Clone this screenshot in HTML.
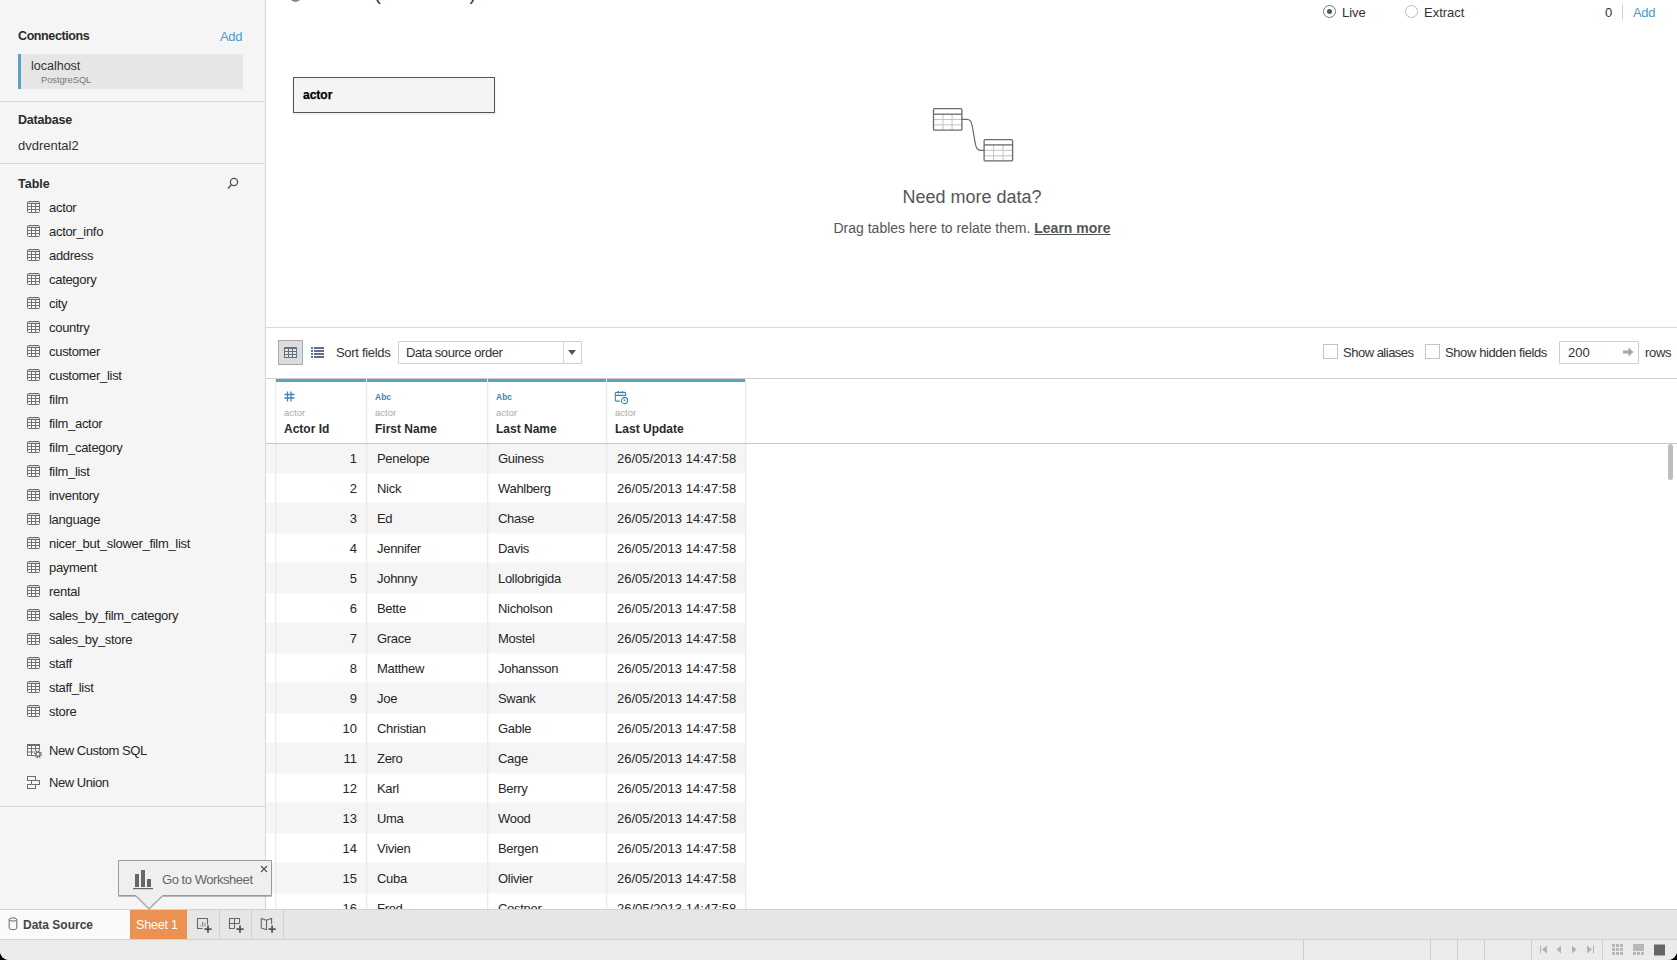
<!DOCTYPE html>
<html><head><meta charset="utf-8">
<style>
*{margin:0;padding:0;box-sizing:border-box}
html,body{width:1677px;height:960px;overflow:hidden;background:#000}
body{font-family:"Liberation Sans",sans-serif;color:#333;position:relative}
#win{position:absolute;left:0;top:0;width:1677px;height:960px;background:#fff;border-radius:0 0 9px 9px;overflow:hidden}
.a{position:absolute;white-space:nowrap}
#side{position:absolute;left:0;top:0;width:266px;height:909px;background:#f5f5f5;border-right:1px solid #d6d6d6}
.hd{font-weight:bold;font-size:12.5px;color:#2b2b2b;line-height:16px}
.hr{position:absolute;height:1px;background:#d9d9d9}
.tt{position:absolute;left:49px;font-size:13px;line-height:16px;color:#262626;letter-spacing:-0.3px}
.cell{position:absolute;font-size:13px;line-height:16px;color:#262626;white-space:nowrap}
.hsm{position:absolute;font-size:9.5px;line-height:12px;color:#aaa}
.hbig{position:absolute;font-size:12px;font-weight:bold;line-height:16px;color:#2b2b2b;white-space:nowrap}
</style></head><body><div id="win">
<div id="side">
<div class="a hd" style="left:18px;top:28px;letter-spacing:-0.4px">Connections</div>
<div class="a" style="left:220px;top:29px;font-size:13px;line-height:16px;color:#4c9bc6;letter-spacing:-0.3px">Add</div>
<div class="a" style="left:18px;top:54px;width:225px;height:35px;background:#e6e6e6;border-left:3px solid #5aa2c8"></div>
<div class="a" style="left:31px;top:58px;font-size:12.5px;line-height:16px;color:#333">localhost</div>
<div class="a" style="left:41px;top:74px;font-size:9.5px;line-height:12px;color:#7a7a7a;letter-spacing:-0.15px">PostgreSQL</div>
<div class="hr" style="left:0;top:101px;width:265px"></div>
<div class="a hd" style="left:18px;top:112px;letter-spacing:-0.2px">Database</div>
<div class="a" style="left:18px;top:138px;font-size:13px;line-height:16px;color:#333">dvdrental2</div>
<div class="hr" style="left:0;top:163px;width:265px"></div>
<div class="a hd" style="left:18px;top:176px">Table</div>
<svg class="a" style="left:227px;top:177px" width="12" height="13" viewBox="0 0 12 13"><circle cx="7" cy="5" r="3.6" fill="none" stroke="#555" stroke-width="1.3"/><line x1="4.3" y1="7.8" x2="1" y2="11.5" stroke="#555" stroke-width="1.5"/></svg>
<svg class="a" style="left:27px;top:201px" width="13" height="12" viewBox="0 0 13 12"><rect x="0.5" y="0.5" width="12" height="11" rx="1" fill="#fafafa" stroke="#6e6e6e" stroke-width="1"/><rect x="1" y="1" width="11" height="1" fill="#d6d6d6"/><path d="M0.5 2.5h12M0.5 5.5h12M0.5 8.5h12M4.5 2.5v9M8.5 2.5v9" stroke="#6e6e6e" stroke-width="1" fill="none"/></svg>
<div class="tt" style="top:200px">actor</div>
<svg class="a" style="left:27px;top:225px" width="13" height="12" viewBox="0 0 13 12"><rect x="0.5" y="0.5" width="12" height="11" rx="1" fill="#fafafa" stroke="#6e6e6e" stroke-width="1"/><rect x="1" y="1" width="11" height="1" fill="#d6d6d6"/><path d="M0.5 2.5h12M0.5 5.5h12M0.5 8.5h12M4.5 2.5v9M8.5 2.5v9" stroke="#6e6e6e" stroke-width="1" fill="none"/></svg>
<div class="tt" style="top:224px">actor_info</div>
<svg class="a" style="left:27px;top:249px" width="13" height="12" viewBox="0 0 13 12"><rect x="0.5" y="0.5" width="12" height="11" rx="1" fill="#fafafa" stroke="#6e6e6e" stroke-width="1"/><rect x="1" y="1" width="11" height="1" fill="#d6d6d6"/><path d="M0.5 2.5h12M0.5 5.5h12M0.5 8.5h12M4.5 2.5v9M8.5 2.5v9" stroke="#6e6e6e" stroke-width="1" fill="none"/></svg>
<div class="tt" style="top:248px">address</div>
<svg class="a" style="left:27px;top:273px" width="13" height="12" viewBox="0 0 13 12"><rect x="0.5" y="0.5" width="12" height="11" rx="1" fill="#fafafa" stroke="#6e6e6e" stroke-width="1"/><rect x="1" y="1" width="11" height="1" fill="#d6d6d6"/><path d="M0.5 2.5h12M0.5 5.5h12M0.5 8.5h12M4.5 2.5v9M8.5 2.5v9" stroke="#6e6e6e" stroke-width="1" fill="none"/></svg>
<div class="tt" style="top:272px">category</div>
<svg class="a" style="left:27px;top:297px" width="13" height="12" viewBox="0 0 13 12"><rect x="0.5" y="0.5" width="12" height="11" rx="1" fill="#fafafa" stroke="#6e6e6e" stroke-width="1"/><rect x="1" y="1" width="11" height="1" fill="#d6d6d6"/><path d="M0.5 2.5h12M0.5 5.5h12M0.5 8.5h12M4.5 2.5v9M8.5 2.5v9" stroke="#6e6e6e" stroke-width="1" fill="none"/></svg>
<div class="tt" style="top:296px">city</div>
<svg class="a" style="left:27px;top:321px" width="13" height="12" viewBox="0 0 13 12"><rect x="0.5" y="0.5" width="12" height="11" rx="1" fill="#fafafa" stroke="#6e6e6e" stroke-width="1"/><rect x="1" y="1" width="11" height="1" fill="#d6d6d6"/><path d="M0.5 2.5h12M0.5 5.5h12M0.5 8.5h12M4.5 2.5v9M8.5 2.5v9" stroke="#6e6e6e" stroke-width="1" fill="none"/></svg>
<div class="tt" style="top:320px">country</div>
<svg class="a" style="left:27px;top:345px" width="13" height="12" viewBox="0 0 13 12"><rect x="0.5" y="0.5" width="12" height="11" rx="1" fill="#fafafa" stroke="#6e6e6e" stroke-width="1"/><rect x="1" y="1" width="11" height="1" fill="#d6d6d6"/><path d="M0.5 2.5h12M0.5 5.5h12M0.5 8.5h12M4.5 2.5v9M8.5 2.5v9" stroke="#6e6e6e" stroke-width="1" fill="none"/></svg>
<div class="tt" style="top:344px">customer</div>
<svg class="a" style="left:27px;top:369px" width="13" height="12" viewBox="0 0 13 12"><rect x="0.5" y="0.5" width="12" height="11" rx="1" fill="#fafafa" stroke="#6e6e6e" stroke-width="1"/><rect x="1" y="1" width="11" height="1" fill="#d6d6d6"/><path d="M0.5 2.5h12M0.5 5.5h12M0.5 8.5h12M4.5 2.5v9M8.5 2.5v9" stroke="#6e6e6e" stroke-width="1" fill="none"/></svg>
<div class="tt" style="top:368px">customer_list</div>
<svg class="a" style="left:27px;top:393px" width="13" height="12" viewBox="0 0 13 12"><rect x="0.5" y="0.5" width="12" height="11" rx="1" fill="#fafafa" stroke="#6e6e6e" stroke-width="1"/><rect x="1" y="1" width="11" height="1" fill="#d6d6d6"/><path d="M0.5 2.5h12M0.5 5.5h12M0.5 8.5h12M4.5 2.5v9M8.5 2.5v9" stroke="#6e6e6e" stroke-width="1" fill="none"/></svg>
<div class="tt" style="top:392px">film</div>
<svg class="a" style="left:27px;top:417px" width="13" height="12" viewBox="0 0 13 12"><rect x="0.5" y="0.5" width="12" height="11" rx="1" fill="#fafafa" stroke="#6e6e6e" stroke-width="1"/><rect x="1" y="1" width="11" height="1" fill="#d6d6d6"/><path d="M0.5 2.5h12M0.5 5.5h12M0.5 8.5h12M4.5 2.5v9M8.5 2.5v9" stroke="#6e6e6e" stroke-width="1" fill="none"/></svg>
<div class="tt" style="top:416px">film_actor</div>
<svg class="a" style="left:27px;top:441px" width="13" height="12" viewBox="0 0 13 12"><rect x="0.5" y="0.5" width="12" height="11" rx="1" fill="#fafafa" stroke="#6e6e6e" stroke-width="1"/><rect x="1" y="1" width="11" height="1" fill="#d6d6d6"/><path d="M0.5 2.5h12M0.5 5.5h12M0.5 8.5h12M4.5 2.5v9M8.5 2.5v9" stroke="#6e6e6e" stroke-width="1" fill="none"/></svg>
<div class="tt" style="top:440px">film_category</div>
<svg class="a" style="left:27px;top:465px" width="13" height="12" viewBox="0 0 13 12"><rect x="0.5" y="0.5" width="12" height="11" rx="1" fill="#fafafa" stroke="#6e6e6e" stroke-width="1"/><rect x="1" y="1" width="11" height="1" fill="#d6d6d6"/><path d="M0.5 2.5h12M0.5 5.5h12M0.5 8.5h12M4.5 2.5v9M8.5 2.5v9" stroke="#6e6e6e" stroke-width="1" fill="none"/></svg>
<div class="tt" style="top:464px">film_list</div>
<svg class="a" style="left:27px;top:489px" width="13" height="12" viewBox="0 0 13 12"><rect x="0.5" y="0.5" width="12" height="11" rx="1" fill="#fafafa" stroke="#6e6e6e" stroke-width="1"/><rect x="1" y="1" width="11" height="1" fill="#d6d6d6"/><path d="M0.5 2.5h12M0.5 5.5h12M0.5 8.5h12M4.5 2.5v9M8.5 2.5v9" stroke="#6e6e6e" stroke-width="1" fill="none"/></svg>
<div class="tt" style="top:488px">inventory</div>
<svg class="a" style="left:27px;top:513px" width="13" height="12" viewBox="0 0 13 12"><rect x="0.5" y="0.5" width="12" height="11" rx="1" fill="#fafafa" stroke="#6e6e6e" stroke-width="1"/><rect x="1" y="1" width="11" height="1" fill="#d6d6d6"/><path d="M0.5 2.5h12M0.5 5.5h12M0.5 8.5h12M4.5 2.5v9M8.5 2.5v9" stroke="#6e6e6e" stroke-width="1" fill="none"/></svg>
<div class="tt" style="top:512px">language</div>
<svg class="a" style="left:27px;top:537px" width="13" height="12" viewBox="0 0 13 12"><rect x="0.5" y="0.5" width="12" height="11" rx="1" fill="#fafafa" stroke="#6e6e6e" stroke-width="1"/><rect x="1" y="1" width="11" height="1" fill="#d6d6d6"/><path d="M0.5 2.5h12M0.5 5.5h12M0.5 8.5h12M4.5 2.5v9M8.5 2.5v9" stroke="#6e6e6e" stroke-width="1" fill="none"/></svg>
<div class="tt" style="top:536px">nicer_but_slower_film_list</div>
<svg class="a" style="left:27px;top:561px" width="13" height="12" viewBox="0 0 13 12"><rect x="0.5" y="0.5" width="12" height="11" rx="1" fill="#fafafa" stroke="#6e6e6e" stroke-width="1"/><rect x="1" y="1" width="11" height="1" fill="#d6d6d6"/><path d="M0.5 2.5h12M0.5 5.5h12M0.5 8.5h12M4.5 2.5v9M8.5 2.5v9" stroke="#6e6e6e" stroke-width="1" fill="none"/></svg>
<div class="tt" style="top:560px">payment</div>
<svg class="a" style="left:27px;top:585px" width="13" height="12" viewBox="0 0 13 12"><rect x="0.5" y="0.5" width="12" height="11" rx="1" fill="#fafafa" stroke="#6e6e6e" stroke-width="1"/><rect x="1" y="1" width="11" height="1" fill="#d6d6d6"/><path d="M0.5 2.5h12M0.5 5.5h12M0.5 8.5h12M4.5 2.5v9M8.5 2.5v9" stroke="#6e6e6e" stroke-width="1" fill="none"/></svg>
<div class="tt" style="top:584px">rental</div>
<svg class="a" style="left:27px;top:609px" width="13" height="12" viewBox="0 0 13 12"><rect x="0.5" y="0.5" width="12" height="11" rx="1" fill="#fafafa" stroke="#6e6e6e" stroke-width="1"/><rect x="1" y="1" width="11" height="1" fill="#d6d6d6"/><path d="M0.5 2.5h12M0.5 5.5h12M0.5 8.5h12M4.5 2.5v9M8.5 2.5v9" stroke="#6e6e6e" stroke-width="1" fill="none"/></svg>
<div class="tt" style="top:608px">sales_by_film_category</div>
<svg class="a" style="left:27px;top:633px" width="13" height="12" viewBox="0 0 13 12"><rect x="0.5" y="0.5" width="12" height="11" rx="1" fill="#fafafa" stroke="#6e6e6e" stroke-width="1"/><rect x="1" y="1" width="11" height="1" fill="#d6d6d6"/><path d="M0.5 2.5h12M0.5 5.5h12M0.5 8.5h12M4.5 2.5v9M8.5 2.5v9" stroke="#6e6e6e" stroke-width="1" fill="none"/></svg>
<div class="tt" style="top:632px">sales_by_store</div>
<svg class="a" style="left:27px;top:657px" width="13" height="12" viewBox="0 0 13 12"><rect x="0.5" y="0.5" width="12" height="11" rx="1" fill="#fafafa" stroke="#6e6e6e" stroke-width="1"/><rect x="1" y="1" width="11" height="1" fill="#d6d6d6"/><path d="M0.5 2.5h12M0.5 5.5h12M0.5 8.5h12M4.5 2.5v9M8.5 2.5v9" stroke="#6e6e6e" stroke-width="1" fill="none"/></svg>
<div class="tt" style="top:656px">staff</div>
<svg class="a" style="left:27px;top:681px" width="13" height="12" viewBox="0 0 13 12"><rect x="0.5" y="0.5" width="12" height="11" rx="1" fill="#fafafa" stroke="#6e6e6e" stroke-width="1"/><rect x="1" y="1" width="11" height="1" fill="#d6d6d6"/><path d="M0.5 2.5h12M0.5 5.5h12M0.5 8.5h12M4.5 2.5v9M8.5 2.5v9" stroke="#6e6e6e" stroke-width="1" fill="none"/></svg>
<div class="tt" style="top:680px">staff_list</div>
<svg class="a" style="left:27px;top:705px" width="13" height="12" viewBox="0 0 13 12"><rect x="0.5" y="0.5" width="12" height="11" rx="1" fill="#fafafa" stroke="#6e6e6e" stroke-width="1"/><rect x="1" y="1" width="11" height="1" fill="#d6d6d6"/><path d="M0.5 2.5h12M0.5 5.5h12M0.5 8.5h12M4.5 2.5v9M8.5 2.5v9" stroke="#6e6e6e" stroke-width="1" fill="none"/></svg>
<div class="tt" style="top:704px">store</div>
<svg class="a" style="left:26px;top:743px" width="17" height="17" viewBox="0 0 17 17"><rect x="1.5" y="1.5" width="12" height="11" fill="#fafafa" stroke="#6e6e6e" stroke-width="1"/><rect x="1" y="1" width="13" height="2" fill="#6e6e6e"/><path d="M1.5 5.5h12M1.5 9h12M5.5 3v9.5M9.5 3v9.5" stroke="#6e6e6e" stroke-width="1"/><circle cx="12" cy="11.3" r="4.2" fill="#f5f5f5"/><circle cx="12" cy="11.3" r="3.2" fill="none" stroke="#6e6e6e" stroke-width="1.6" stroke-dasharray="1.3 1.2"/><circle cx="12" cy="11.3" r="2.1" fill="none" stroke="#6e6e6e" stroke-width="1.3"/></svg>
<div class="tt" style="top:743px;letter-spacing:-0.45px">New Custom SQL</div>
<svg class="a" style="left:26px;top:775px" width="16" height="17" viewBox="0 0 16 17"><g fill="none" stroke="#6e6e6e" stroke-width="1"><rect x="1.5" y="1.5" width="8" height="4"/><rect x="5.5" y="5.5" width="8" height="4"/><rect x="1.5" y="9.5" width="8" height="4"/></g></svg>
<div class="tt" style="top:775px;letter-spacing:-0.45px">New Union</div>
<div class="hr" style="left:0;top:806px;width:265px"></div>
</div>
<div class="a" style="left:327px;top:-17px;font-size:19px;line-height:22px;color:#333">actor (dvdrental2)</div>
<div class="a" style="left:290px;top:-8px;width:11px;height:10px;border-radius:50%;background:#8a8a8a"></div>
<div class="a" style="left:1323px;top:5px;width:13px;height:13px;border-radius:50%;border:1px solid #777;background:#fff"></div>
<div class="a" style="left:1327px;top:9px;width:5px;height:5px;border-radius:50%;background:#555"></div>
<div class="a" style="left:1342px;top:5px;font-size:13px;line-height:16px;color:#333">Live</div>
<div class="a" style="left:1405px;top:5px;width:13px;height:13px;border-radius:50%;border:1px solid #bbb;background:#fff"></div>
<div class="a" style="left:1424px;top:5px;font-size:13px;line-height:16px;color:#333">Extract</div>
<div class="a" style="left:1605px;top:5px;font-size:13px;line-height:16px;color:#333">0</div>
<div class="a" style="left:1622px;top:4px;width:1px;height:16px;background:#d4d4d4"></div>
<div class="a" style="left:1633px;top:5px;font-size:13px;line-height:16px;color:#4c9bc6;letter-spacing:-0.3px">Add</div>
<div class="a" style="left:293px;top:77px;width:202px;height:36px;background:#f4f4f4;border:1px solid #555;box-shadow:0 1px 2px rgba(0,0,0,0.12)"></div>
<div class="a" style="left:303px;top:87px;font-size:12px;font-weight:bold;line-height:16px;color:#000;-webkit-text-stroke:0.25px #000">actor</div>
<svg class="a" style="left:930px;top:105px" width="90" height="60" viewBox="0 0 90 60">
<g fill="none">
<path d="M3.5 14.5h28M3.5 19.8h28M13 9.2v16M22.1 9.2v16" stroke="#c4c4c4" stroke-width="1"/>
<rect x="3.5" y="3.7" width="28.4" height="21.5" rx="1.2" stroke="#6a6a6a" stroke-width="1.3"/>
<path d="M3.5 9.2h28.4" stroke="#6a6a6a" stroke-width="1.3"/>
<path d="M54.1 45.3h28.5M54.1 50.8h28.5M63.6 39.8v16M73.1 39.8v16" stroke="#c4c4c4" stroke-width="1"/>
<rect x="54.1" y="34.7" width="28.5" height="21.2" rx="1.2" stroke="#6a6a6a" stroke-width="1.3"/>
<path d="M54.1 39.9h28.5" stroke="#6a6a6a" stroke-width="1.3"/>
<path d="M31.9 14.3h5c3 0 4.6 2 5.2 6l3 17c0.6 4 2.2 8 5.2 8h3.8" stroke="#6a6a6a" stroke-width="1.2"/>
</g></svg>
<div class="a" style="left:0;width:1944px;text-align:center;top:186px;font-size:18px;line-height:22px;color:#555">Need more data?</div>
<div class="a" style="left:0;width:1944px;text-align:center;top:219px;font-size:14px;line-height:18px;color:#555">Drag tables here to relate them. <b style="text-decoration:underline;color:#555">Learn more</b></div>
<div class="a" style="left:266px;top:327px;width:1411px;height:1px;background:#d9d9d9"></div>
<div class="a" style="left:278px;top:340px;width:25px;height:25px;background:#dcdcdc;border:1px solid #a9a9a9"></div>
<svg class="a" style="left:284px;top:347px" width="13" height="11" viewBox="0 0 13 11"><rect x="0" y="0" width="13" height="11" rx="0.5" fill="#607089"/><g fill="#e9e7e3"><rect x="1" y="2" width="3" height="2"/><rect x="5" y="2" width="3" height="2"/><rect x="9" y="2" width="3" height="2"/><rect x="1" y="5" width="3" height="2"/><rect x="5" y="5" width="3" height="2"/><rect x="9" y="5" width="3" height="2"/><rect x="1" y="8" width="3" height="2"/><rect x="5" y="8" width="3" height="2"/><rect x="9" y="8" width="3" height="2"/></g></svg>
<svg class="a" style="left:311px;top:347px" width="13" height="11" viewBox="0 0 13 11"><g fill="#607089"><rect x="0" y="0" width="2" height="2"/><rect x="0" y="3" width="2" height="2"/><rect x="0" y="6" width="2" height="2"/><rect x="0" y="9" width="2" height="2"/><rect x="3" y="0" width="10" height="2"/><rect x="3" y="3" width="10" height="2"/><rect x="3" y="6" width="10" height="2"/><rect x="3" y="9" width="10" height="2"/></g></svg>
<div class="a" style="left:336px;top:345px;font-size:13px;line-height:16px;color:#333;letter-spacing:-0.3px">Sort fields</div>
<div class="a" style="left:398px;top:341px;width:184px;height:23px;background:#fff;border:1px solid #cfcfcf;border-radius:1px"></div>
<div class="a" style="left:563px;top:342px;width:1px;height:21px;background:#d6d6d6"></div>
<div class="a" style="left:568px;top:350px;width:0;height:0;border-left:4.5px solid transparent;border-right:4.5px solid transparent;border-top:5px solid #555"></div>
<div class="a" style="left:406px;top:345px;font-size:13px;line-height:16px;color:#333;letter-spacing:-0.45px">Data source order</div>
<div class="a" style="left:1323px;top:344px;width:15px;height:15px;border:1px solid #c4c4c4;background:#fff"></div>
<div class="a" style="left:1343px;top:345px;font-size:13px;line-height:16px;color:#333;letter-spacing:-0.5px">Show aliases</div>
<div class="a" style="left:1425px;top:344px;width:15px;height:15px;border:1px solid #c4c4c4;background:#fff"></div>
<div class="a" style="left:1445px;top:345px;font-size:13px;line-height:16px;color:#333;letter-spacing:-0.4px">Show hidden fields</div>
<div class="a" style="left:1559px;top:341px;width:80px;height:23px;border:1px solid #cfcfcf;background:#fff;border-radius:1px"></div>
<div class="a" style="left:1568px;top:345px;font-size:13px;line-height:16px;color:#333">200</div>
<svg class="a" style="left:1623px;top:347px" width="11" height="10" viewBox="0 0 11 10"><path d="M0 3.5h5.5V0.5L10.5 5 5.5 9.5V6.5H0z" fill="#a6a6a6"/></svg>
<div class="a" style="left:1645px;top:345px;font-size:13px;line-height:16px;color:#333;letter-spacing:-0.3px">rows</div>
<div class="a" style="left:266px;top:378px;width:1411px;height:1px;background:#cfcfcf"></div>
<svg class="a" style="left:266px;top:444px" width="480" height="466" viewBox="0 0 480 466"><rect x="0" y="0" width="480" height="29.5" fill="#f5f5f5"/><rect x="0" y="58.5" width="480" height="31" fill="#f5f5f5"/><rect x="0" y="118.5" width="480" height="31" fill="#f5f5f5"/><rect x="0" y="178.5" width="480" height="31" fill="#f5f5f5"/><rect x="0" y="238.5" width="480" height="31" fill="#f5f5f5"/><rect x="0" y="298.5" width="480" height="31" fill="#f5f5f5"/><rect x="0" y="358.5" width="480" height="31" fill="#f5f5f5"/><rect x="0" y="418.5" width="480" height="31" fill="#f5f5f5"/></svg>
<div class="a" style="left:276px;top:379px;width:90px;height:3px;background:#5aa2c8"></div>
<div class="a" style="left:367px;top:379px;width:120px;height:3px;background:#5aa2c8"></div>
<div class="a" style="left:488px;top:379px;width:118px;height:3px;background:#5aa2c8"></div>
<div class="a" style="left:607px;top:379px;width:138px;height:3px;background:#5aa2c8"></div>
<div class="a" style="left:275px;top:379px;width:1px;height:530px;background:#ebebeb"></div>
<div class="a" style="left:276px;top:379px;width:1px;height:530px;background:rgba(0,0,0,0.025)"></div>
<div class="a" style="left:366px;top:379px;width:1px;height:530px;background:#ebebeb"></div>
<div class="a" style="left:367px;top:379px;width:1px;height:530px;background:rgba(0,0,0,0.025)"></div>
<div class="a" style="left:487px;top:379px;width:1px;height:530px;background:#ebebeb"></div>
<div class="a" style="left:488px;top:379px;width:1px;height:530px;background:rgba(0,0,0,0.025)"></div>
<div class="a" style="left:606px;top:379px;width:1px;height:530px;background:#ebebeb"></div>
<div class="a" style="left:607px;top:379px;width:1px;height:530px;background:rgba(0,0,0,0.025)"></div>
<div class="a" style="left:745px;top:379px;width:1px;height:530px;background:#ebebeb"></div>
<div class="a" style="left:746px;top:379px;width:1px;height:530px;background:rgba(0,0,0,0.025)"></div>
<div class="a" style="left:266px;top:443px;width:1411px;height:1px;background:#c6c8ca"></div>
<svg class="a" style="left:284px;top:391px" width="11" height="11" viewBox="0 0 11 11"><path d="M3.5 0.5v10M7 0.5v10M0.5 3.5h10M0.5 7h10" stroke="#4088ad" stroke-width="1.3"/></svg>
<div class="a" style="left:375px;top:392px;font-size:8.5px;font-weight:bold;line-height:11px;color:#4088ad">Abc</div>
<div class="a" style="left:496px;top:392px;font-size:8.5px;font-weight:bold;line-height:11px;color:#4088ad">Abc</div>
<svg class="a" style="left:614px;top:390px" width="16" height="16" viewBox="0 0 16 16"><g fill="none" stroke="#3f86aa" stroke-width="1.1"><path d="M5.8 11.1H2.3a1 1 0 0 1-1-1V3.4a1 1 0 0 1 1-1h8.4a1 1 0 0 1 1 1v2.3"/><path d="M1.3 5.4h10.4M4.4 1v2.6M8.5 1v2.6"/><circle cx="10.5" cy="10.5" r="3.1"/><path d="M10.1 8.5v2.2h1.5" stroke-width="1"/></g></svg>
<div class="hsm" style="left:284px;top:407px">actor</div>
<div class="hbig" style="left:284px;top:421px">Actor Id</div>
<div class="hsm" style="left:375px;top:407px">actor</div>
<div class="hbig" style="left:375px;top:421px">First Name</div>
<div class="hsm" style="left:496px;top:407px">actor</div>
<div class="hbig" style="left:496px;top:421px">Last Name</div>
<div class="hsm" style="left:615px;top:407px">actor</div>
<div class="hbig" style="left:615px;top:421px">Last Update</div>
<div class="cell" style="left:275px;width:82px;text-align:right;top:451px">1</div>
<div class="cell" style="left:377px;top:451px;letter-spacing:-0.3px">Penelope</div>
<div class="cell" style="left:498px;top:451px;letter-spacing:-0.3px">Guiness</div>
<div class="cell" style="left:617px;top:451px">26/05/2013 14:47:58</div>
<div class="cell" style="left:275px;width:82px;text-align:right;top:481px">2</div>
<div class="cell" style="left:377px;top:481px;letter-spacing:-0.3px">Nick</div>
<div class="cell" style="left:498px;top:481px;letter-spacing:-0.3px">Wahlberg</div>
<div class="cell" style="left:617px;top:481px">26/05/2013 14:47:58</div>
<div class="cell" style="left:275px;width:82px;text-align:right;top:511px">3</div>
<div class="cell" style="left:377px;top:511px;letter-spacing:-0.3px">Ed</div>
<div class="cell" style="left:498px;top:511px;letter-spacing:-0.3px">Chase</div>
<div class="cell" style="left:617px;top:511px">26/05/2013 14:47:58</div>
<div class="cell" style="left:275px;width:82px;text-align:right;top:541px">4</div>
<div class="cell" style="left:377px;top:541px;letter-spacing:-0.3px">Jennifer</div>
<div class="cell" style="left:498px;top:541px;letter-spacing:-0.3px">Davis</div>
<div class="cell" style="left:617px;top:541px">26/05/2013 14:47:58</div>
<div class="cell" style="left:275px;width:82px;text-align:right;top:571px">5</div>
<div class="cell" style="left:377px;top:571px;letter-spacing:-0.3px">Johnny</div>
<div class="cell" style="left:498px;top:571px;letter-spacing:-0.3px">Lollobrigida</div>
<div class="cell" style="left:617px;top:571px">26/05/2013 14:47:58</div>
<div class="cell" style="left:275px;width:82px;text-align:right;top:601px">6</div>
<div class="cell" style="left:377px;top:601px;letter-spacing:-0.3px">Bette</div>
<div class="cell" style="left:498px;top:601px;letter-spacing:-0.3px">Nicholson</div>
<div class="cell" style="left:617px;top:601px">26/05/2013 14:47:58</div>
<div class="cell" style="left:275px;width:82px;text-align:right;top:631px">7</div>
<div class="cell" style="left:377px;top:631px;letter-spacing:-0.3px">Grace</div>
<div class="cell" style="left:498px;top:631px;letter-spacing:-0.3px">Mostel</div>
<div class="cell" style="left:617px;top:631px">26/05/2013 14:47:58</div>
<div class="cell" style="left:275px;width:82px;text-align:right;top:661px">8</div>
<div class="cell" style="left:377px;top:661px;letter-spacing:-0.3px">Matthew</div>
<div class="cell" style="left:498px;top:661px;letter-spacing:-0.3px">Johansson</div>
<div class="cell" style="left:617px;top:661px">26/05/2013 14:47:58</div>
<div class="cell" style="left:275px;width:82px;text-align:right;top:691px">9</div>
<div class="cell" style="left:377px;top:691px;letter-spacing:-0.3px">Joe</div>
<div class="cell" style="left:498px;top:691px;letter-spacing:-0.3px">Swank</div>
<div class="cell" style="left:617px;top:691px">26/05/2013 14:47:58</div>
<div class="cell" style="left:275px;width:82px;text-align:right;top:721px">10</div>
<div class="cell" style="left:377px;top:721px;letter-spacing:-0.3px">Christian</div>
<div class="cell" style="left:498px;top:721px;letter-spacing:-0.3px">Gable</div>
<div class="cell" style="left:617px;top:721px">26/05/2013 14:47:58</div>
<div class="cell" style="left:275px;width:82px;text-align:right;top:751px">11</div>
<div class="cell" style="left:377px;top:751px;letter-spacing:-0.3px">Zero</div>
<div class="cell" style="left:498px;top:751px;letter-spacing:-0.3px">Cage</div>
<div class="cell" style="left:617px;top:751px">26/05/2013 14:47:58</div>
<div class="cell" style="left:275px;width:82px;text-align:right;top:781px">12</div>
<div class="cell" style="left:377px;top:781px;letter-spacing:-0.3px">Karl</div>
<div class="cell" style="left:498px;top:781px;letter-spacing:-0.3px">Berry</div>
<div class="cell" style="left:617px;top:781px">26/05/2013 14:47:58</div>
<div class="cell" style="left:275px;width:82px;text-align:right;top:811px">13</div>
<div class="cell" style="left:377px;top:811px;letter-spacing:-0.3px">Uma</div>
<div class="cell" style="left:498px;top:811px;letter-spacing:-0.3px">Wood</div>
<div class="cell" style="left:617px;top:811px">26/05/2013 14:47:58</div>
<div class="cell" style="left:275px;width:82px;text-align:right;top:841px">14</div>
<div class="cell" style="left:377px;top:841px;letter-spacing:-0.3px">Vivien</div>
<div class="cell" style="left:498px;top:841px;letter-spacing:-0.3px">Bergen</div>
<div class="cell" style="left:617px;top:841px">26/05/2013 14:47:58</div>
<div class="cell" style="left:275px;width:82px;text-align:right;top:871px">15</div>
<div class="cell" style="left:377px;top:871px;letter-spacing:-0.3px">Cuba</div>
<div class="cell" style="left:498px;top:871px;letter-spacing:-0.3px">Olivier</div>
<div class="cell" style="left:617px;top:871px">26/05/2013 14:47:58</div>
<div class="cell" style="left:275px;width:82px;text-align:right;top:901px">16</div>
<div class="cell" style="left:377px;top:901px;letter-spacing:-0.3px">Fred</div>
<div class="cell" style="left:498px;top:901px;letter-spacing:-0.3px">Costner</div>
<div class="cell" style="left:617px;top:901px">26/05/2013 14:47:58</div>
<div class="a" style="left:1668px;top:444px;width:5px;height:36px;border-radius:3px;background:#bdbdbd"></div>
<div class="a" style="left:0;top:909px;width:1677px;height:31px;background:#e6e6e6;border-top:1px solid #d2d2d2;border-bottom:1px solid #d2d2d2"></div>
<div class="a" style="left:0;top:910px;width:130px;height:29px;background:#fafafa"></div>
<svg class="a" style="left:8px;top:917px" width="10" height="14" viewBox="0 0 10 14"><ellipse cx="5" cy="2.5" rx="3.8" ry="1.6" fill="none" stroke="#666" stroke-width="1"/><path d="M1.2 2.5v8.5c0 1 1.7 1.6 3.8 1.6s3.8-.6 3.8-1.6v-8.5" fill="none" stroke="#666" stroke-width="1"/></svg>
<div class="a" style="left:23px;top:917px;font-size:12px;font-weight:bold;line-height:16px;color:#444">Data Source</div>
<div class="a" style="left:130px;top:910px;width:57px;height:29px;background:#eb9151"></div>
<div class="a" style="left:136px;top:917px;font-size:12.5px;line-height:16px;color:#fff;letter-spacing:-0.2px">Sheet 1</div>
<div class="a" style="left:219px;top:910px;width:1px;height:29px;background:#d2d2d2"></div>
<div class="a" style="left:251px;top:910px;width:1px;height:29px;background:#d2d2d2"></div>
<div class="a" style="left:283px;top:910px;width:1px;height:29px;background:#d2d2d2"></div>
<svg class="a" style="left:196px;top:917px" width="17" height="17" viewBox="0 0 17 17"><path d="M6.6 11.5H1.5V1.5h10v6" fill="none" stroke="#666" stroke-width="1.1" stroke-linejoin="round"/><path d="M4.2 8v1.5" stroke="#999" stroke-width="1"/><path d="M6.7 5.2v4.3" stroke="#666" stroke-width="1"/><path d="M9.2 6v3.5" stroke="#999" stroke-width="1.3"/><path d="M12 8.5v7.2M8.4 12.1h7.2" stroke="#555" stroke-width="1.8"/></svg>
<svg class="a" style="left:228px;top:917px" width="17" height="17" viewBox="0 0 17 17"><path d="M6.6 11.5H1.5V1.5h10v5M1.5 6.5h10M6.5 1.5v10" fill="none" stroke="#666" stroke-width="1.1" stroke-linejoin="round"/><path d="M12 8.5v7.2M8.4 12.1h7.2" stroke="#555" stroke-width="1.8"/></svg>
<svg class="a" style="left:260px;top:917px" width="17" height="17" viewBox="0 0 17 17"><path d="M11.6 7V1.3L6.5 3.2 1.3 1.5V11l5.2 1.7V3.2" fill="none" stroke="#666" stroke-width="1.1" stroke-linejoin="round"/><path d="M12.1 8.5v7.2M8.5 12.1h7.2" stroke="#555" stroke-width="1.8"/></svg>
<div class="a" style="left:0;top:940px;width:1677px;height:20px;background:#ebebeb"></div>
<div class="a" style="left:1303px;top:940px;width:1px;height:20px;background:#cfcfcf"></div>
<div class="a" style="left:1430px;top:940px;width:1px;height:20px;background:#cfcfcf"></div>
<div class="a" style="left:1457px;top:940px;width:1px;height:20px;background:#cfcfcf"></div>
<div class="a" style="left:1484px;top:940px;width:1px;height:20px;background:#cfcfcf"></div>
<div class="a" style="left:1531px;top:940px;width:1px;height:20px;background:#cfcfcf"></div>
<div class="a" style="left:1602px;top:940px;width:1px;height:20px;background:#cfcfcf"></div>
<svg class="a" style="left:1537px;top:943px" width="60" height="13" viewBox="0 0 60 13">
<g fill="#b3b3b3"><rect x="3" y="2.5" width="1" height="8"/><path d="M10 2.5v8L5 6.5z"/><path d="M24 2.5v8l-4.5-4z"/><path d="M35 2.5v8l4.5-4z"/><path d="M50 2.5v8l5-4z"/><rect x="56" y="2.5" width="1" height="8"/></g></svg>
<svg class="a" style="left:1610.5px;top:943px" width="58" height="14" viewBox="0 0 58 14">
<g fill="#b8b8b8"><rect x="1" y="1" width="3" height="3"/><rect x="5" y="1" width="3" height="3"/><rect x="9" y="1" width="3" height="3"/><rect x="1" y="5" width="3" height="3"/><rect x="5" y="5" width="3" height="3"/><rect x="9" y="5" width="3" height="3"/><rect x="1" y="9" width="3" height="3"/><rect x="5" y="9" width="3" height="3"/><rect x="9" y="9" width="3" height="3"/>
<rect x="22" y="1" width="11" height="7"/><rect x="22" y="9" width="3" height="3"/><rect x="26" y="9" width="3" height="3"/><rect x="30" y="9" width="3" height="3"/></g>
<rect x="43" y="1.5" width="11" height="11" fill="#666"/></svg>
<svg class="a" style="left:117px;top:859px;filter:drop-shadow(0 1px 0.6px rgba(0,0,0,0.25))" width="157" height="52" viewBox="0 0 157 52">
<path d="M1.5 1.5H154.5V36.5H45.5L32 49.5L19 36.5H1.5Z" fill="#efefef" stroke="#9a9a9a" stroke-width="1"/>
<path d="M144 7l6 6M150 7l-6 6" stroke="#555" stroke-width="1.2"/>
<g fill="#666"><rect x="18" y="15" width="4" height="13"/><rect x="24" y="11" width="4" height="17"/><rect x="30" y="20" width="4" height="8"/><rect x="16" y="29" width="20" height="1.2"/></g>
</svg>
<div class="a" style="left:162px;top:872px;font-size:13px;line-height:16px;color:#666;letter-spacing:-0.45px">Go to Worksheet</div>
</div></body></html>
